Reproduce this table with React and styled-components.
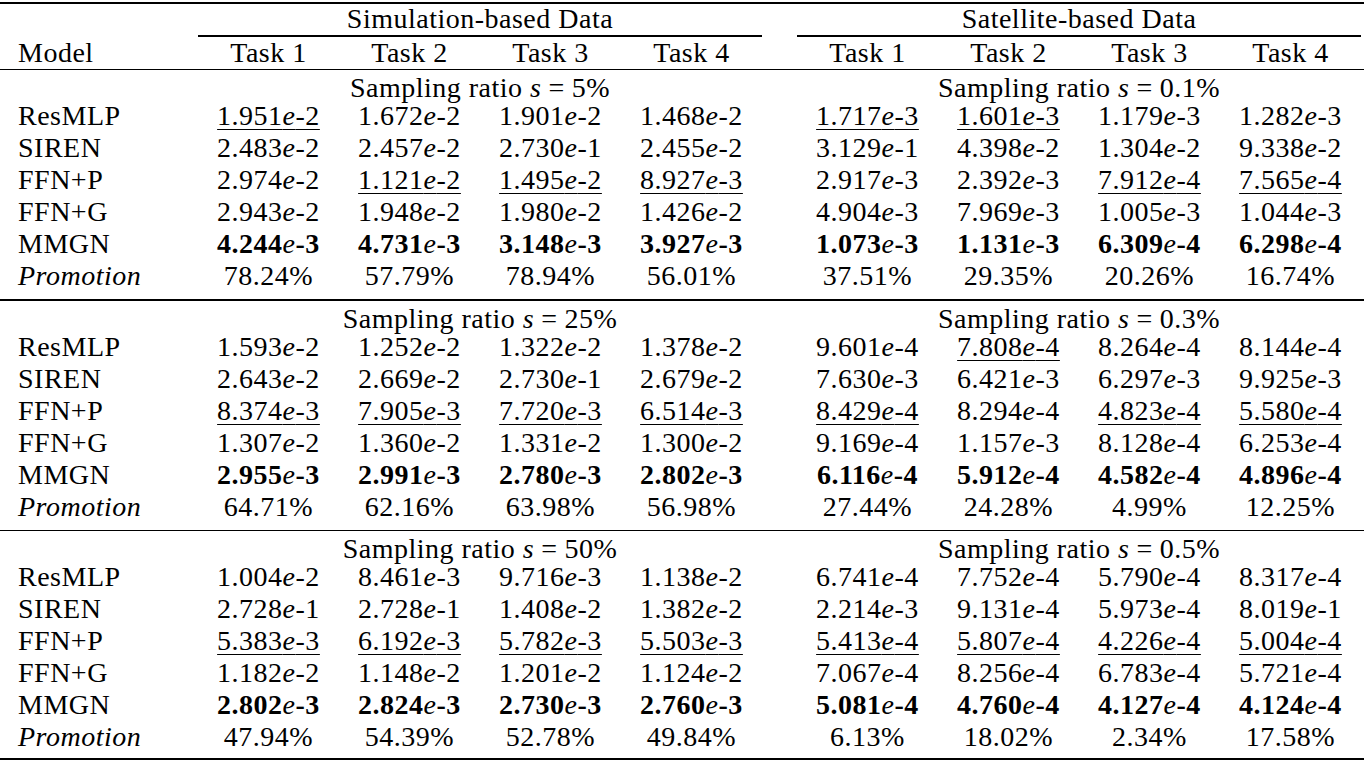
import React from 'react'
import styled, { createGlobalStyle } from 'styled-components'

const GlobalStyle = createGlobalStyle`
  html, body { margin: 0; padding: 0; background: #fff; }
  body { font-family: "Liberation Serif", "Times New Roman", serif; color: #000; }
`

const COLS = '198px repeat(4, 141px) 35px repeat(4, 141px)'

const TableWrap = styled.div`
  width: 1364px;
  padding-top: 2px;
  font-family: "Liberation Serif", "Times New Roman", serif;
  font-size: 28px;
  letter-spacing: 0.5px;
`

const Rule = styled.div`
  height: ${p => p.thick ? 2 : 1.5}px;
  background: #000;
  margin-top: ${p => p.gap || 0}px;
`

const Row = styled.div`
  display: grid;
  grid-template-columns: ${COLS};
  height: ${p => p.h || 32}px;
  line-height: ${p => p.h || 32}px;
  white-space: nowrap;
`

const Label = styled.div`
  padding-left: 18px;
  font-style: ${p => p.italic ? 'italic' : 'normal'};
`

const Cell = styled.div`
  text-align: center;
  grid-column: ${p => p.col};
`

const GroupHead = styled.div`
  grid-column: ${p => p.span};
  text-align: center;
`

const MidRules = styled.div`
  display: grid;
  grid-template-columns: ${COLS};
  height: 1.5px;
  margin-top: 1px;
`

const MidRule = styled.div`
  grid-column: ${p => p.span};
  background: #000;
`

const SectionRow = styled.div`
  display: grid;
  grid-template-columns: ${COLS};
  height: 30px;
  padding-top: 6px;
  box-sizing: border-box;
  line-height: 24px;
  white-space: nowrap;
`

const Val = styled.span`
  ${p => p.under && `
    text-decoration: underline;
    text-decoration-thickness: 1px;
    text-underline-offset: 4px;
  `}
`

const Num = styled.span`
  font-weight: ${p => p.bold ? 700 : 400};
`

const Exp = styled.i`
  font-style: italic;
  font-weight: 400;
`

const Mathit = styled.i`
  font-style: italic;
`

const Eq = styled.span`
  margin: 0 7px;
`

const blocks = [
  {
    sim: '5%', sat: '0.1%',
    rows: [
      ['ResMLP', ['_1.951e-2', '1.672e-2', '1.901e-2', '1.468e-2'], ['_1.717e-3', '_1.601e-3', '1.179e-3', '1.282e-3']],
      ['SIREN', ['2.483e-2', '2.457e-2', '2.730e-1', '2.455e-2'], ['3.129e-1', '4.398e-2', '1.304e-2', '9.338e-2']],
      ['FFN+P', ['2.974e-2', '_1.121e-2', '_1.495e-2', '_8.927e-3'], ['2.917e-3', '2.392e-3', '_7.912e-4', '_7.565e-4']],
      ['FFN+G', ['2.943e-2', '1.948e-2', '1.980e-2', '1.426e-2'], ['4.904e-3', '7.969e-3', '1.005e-3', '1.044e-3']],
      ['MMGN', ['*4.244e-3', '*4.731e-3', '*3.148e-3', '*3.927e-3'], ['*1.073e-3', '*1.131e-3', '*6.309e-4', '*6.298e-4']]
    ],
    promo: [['78.24%', '57.79%', '78.94%', '56.01%'], ['37.51%', '29.35%', '20.26%', '16.74%']]
  },
  {
    sim: '25%', sat: '0.3%',
    rows: [
      ['ResMLP', ['1.593e-2', '1.252e-2', '1.322e-2', '1.378e-2'], ['9.601e-4', '_7.808e-4', '8.264e-4', '8.144e-4']],
      ['SIREN', ['2.643e-2', '2.669e-2', '2.730e-1', '2.679e-2'], ['7.630e-3', '6.421e-3', '6.297e-3', '9.925e-3']],
      ['FFN+P', ['_8.374e-3', '_7.905e-3', '_7.720e-3', '_6.514e-3'], ['_8.429e-4', '8.294e-4', '_4.823e-4', '_5.580e-4']],
      ['FFN+G', ['1.307e-2', '1.360e-2', '1.331e-2', '1.300e-2'], ['9.169e-4', '1.157e-3', '8.128e-4', '6.253e-4']],
      ['MMGN', ['*2.955e-3', '*2.991e-3', '*2.780e-3', '*2.802e-3'], ['*6.116e-4', '*5.912e-4', '*4.582e-4', '*4.896e-4']]
    ],
    promo: [['64.71%', '62.16%', '63.98%', '56.98%'], ['27.44%', '24.28%', '4.99%', '12.25%']]
  },
  {
    sim: '50%', sat: '0.5%',
    rows: [
      ['ResMLP', ['1.004e-2', '8.461e-3', '9.716e-3', '1.138e-2'], ['6.741e-4', '7.752e-4', '5.790e-4', '8.317e-4']],
      ['SIREN', ['2.728e-1', '2.728e-1', '1.408e-2', '1.382e-2'], ['2.214e-3', '9.131e-4', '5.973e-4', '8.019e-1']],
      ['FFN+P', ['_5.383e-3', '_6.192e-3', '_5.782e-3', '_5.503e-3'], ['_5.413e-4', '_5.807e-4', '_4.226e-4', '_5.004e-4']],
      ['FFN+G', ['1.182e-2', '1.148e-2', '1.201e-2', '1.124e-2'], ['7.067e-4', '8.256e-4', '6.783e-4', '5.721e-4']],
      ['MMGN', ['*2.802e-3', '*2.824e-3', '*2.730e-3', '*2.760e-3'], ['*5.081e-4', '*4.760e-4', '*4.127e-4', '*4.124e-4']]
    ],
    promo: [['47.94%', '54.39%', '52.78%', '49.84%'], ['6.13%', '18.02%', '2.34%', '17.58%']]
  }
]

// '_' prefix = underlined (second best), '*' prefix = bold (best)
const renderValue = (raw) => {
  const under = raw[0] === '_'
  const bold = raw[0] === '*'
  const text = under || bold ? raw.slice(1) : raw
  const [mant, exp] = text.split('e')
  return <Val under={under}>
    <Num bold={bold}>{mant}</Num><Exp>e</Exp><Num bold={bold}>{exp}</Num>
  </Val>
}

const simCols = [2, 3, 4, 5]
const satCols = [7, 8, 9, 10]

const Ratio = ({ value }) => <>Sampling ratio <Mathit>s</Mathit><Eq>=</Eq>{value}</>

const Block = ({ block, last }) => <>
  <SectionRow>
    <GroupHead span='2 / 6'><Ratio value={block.sim} /></GroupHead>
    <GroupHead span='7 / 11'><Ratio value={block.sat} /></GroupHead>
  </SectionRow>
  {block.rows.map(([name, sim, sat]) => <Row key={name}>
    <Label>{name}</Label>
    {sim.map((v, i) => <Cell key={'a' + i} col={simCols[i]}>{renderValue(v)}</Cell>)}
    {sat.map((v, i) => <Cell key={'b' + i} col={satCols[i]}>{renderValue(v)}</Cell>)}
  </Row>)}
  <Row>
    <Label italic>Promotion</Label>
    {block.promo[0].map((v, i) => <Cell key={'a' + i} col={simCols[i]}>{v}</Cell>)}
    {block.promo[1].map((v, i) => <Cell key={'b' + i} col={satCols[i]}>{v}</Cell>)}
  </Row>
  <Rule thick={last} gap={last ? 5 : 7} />
</>

export default function App () {
  return <TableWrap>
    <GlobalStyle />
    <Rule thick />
    <Row h={30}>
      <div />
      <GroupHead span='2 / 6'>Simulation-based Data</GroupHead>
      <GroupHead span='7 / 11'>Satellite-based Data</GroupHead>
    </Row>
    <MidRules>
      <MidRule span='2 / 6' />
      <MidRule span='7 / 11' />
    </MidRules>
    <Row>
      <Label>Model</Label>
      {simCols.map((c, i) => <Cell key={'a' + c} col={c}>Task {i + 1}</Cell>)}
      {satCols.map((c, i) => <Cell key={'b' + c} col={c}>Task {i + 1}</Cell>)}
    </Row>
    <Rule />
    {blocks.map((b, i) => <Block key={i} block={b} last={i === blocks.length - 1} />)}
  </TableWrap>
}
